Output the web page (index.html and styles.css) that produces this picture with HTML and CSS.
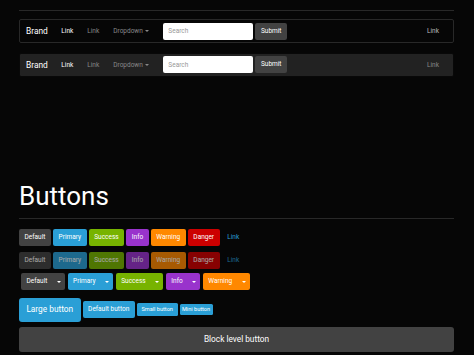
FILE: index.html
```html
<!DOCTYPE html>
<html lang="en">
<head>
<meta charset="utf-8">
<title>Buttons</title>
<link rel="stylesheet" href="styles.css">
</head>
<body>
<div class="container">
  <hr class="rule top-rule">

  <nav class="navbar">
    <span class="brand">Brand</span>
    <a class="nav-link active" href="#">Link</a>
    <a class="nav-link" href="#">Link</a>
    <a class="nav-link" href="#">Dropdown<span class="caret"></span></a>
    <form class="navbar-form">
      <input class="search" type="text" placeholder="Search">
      <button class="btn btn-default" type="button">Submit</button>
    </form>
    <a class="nav-link nav-right light" href="#">Link</a>
  </nav>

  <nav class="navbar navbar-inverse">
    <span class="brand">Brand</span>
    <a class="nav-link active" href="#">Link</a>
    <a class="nav-link" href="#">Link</a>
    <a class="nav-link" href="#">Dropdown<span class="caret"></span></a>
    <form class="navbar-form">
      <input class="search" type="text" placeholder="Search">
      <button class="btn btn-default" type="button">Submit</button>
    </form>
    <a class="nav-link nav-right" href="#">Link</a>
  </nav>

  <h1 class="title">Buttons</h1>
  <hr class="rule heading-rule">

  <div class="btn-row row-1">
    <button class="btn btn-default" type="button">Default</button>
    <button class="btn btn-primary" type="button">Primary</button>
    <button class="btn btn-success" type="button">Success</button>
    <button class="btn btn-info" type="button">Info</button>
    <button class="btn btn-warning" type="button">Warning</button>
    <button class="btn btn-danger" type="button">Danger</button>
    <button class="btn btn-link" type="button">Link</button>
  </div>

  <div class="btn-row row-2 disabled">
    <button class="btn btn-default" type="button">Default</button>
    <button class="btn btn-primary" type="button">Primary</button>
    <button class="btn btn-success" type="button">Success</button>
    <button class="btn btn-info" type="button">Info</button>
    <button class="btn btn-warning" type="button">Warning</button>
    <button class="btn btn-danger" type="button">Danger</button>
    <button class="btn btn-link" type="button">Link</button>
  </div>

  <div class="btn-row row-3">
    <div class="split">
      <button class="btn btn-default" type="button">Default</button>
      <button class="btn btn-default toggle" type="button"><span class="caret"></span></button>
    </div>
    <div class="split">
      <button class="btn btn-primary" type="button">Primary</button>
      <button class="btn btn-primary toggle" type="button"><span class="caret"></span></button>
    </div>
    <div class="split">
      <button class="btn btn-success" type="button">Success</button>
      <button class="btn btn-success toggle" type="button"><span class="caret"></span></button>
    </div>
    <div class="split">
      <button class="btn btn-info" type="button">Info</button>
      <button class="btn btn-info toggle" type="button"><span class="caret"></span></button>
    </div>
    <div class="split">
      <button class="btn btn-warning" type="button">Warning</button>
      <button class="btn btn-warning toggle" type="button"><span class="caret"></span></button>
    </div>
  </div>

  <div class="btn-row row-4">
    <button class="btn btn-primary btn-lg" type="button">Large button</button>
    <button class="btn btn-primary" type="button">Default button</button>
    <button class="btn btn-primary btn-sm" type="button">Small button</button>
    <button class="btn btn-primary btn-xs" type="button">Mini button</button>
  </div>

  <button class="btn btn-default btn-lg btn-block" type="button">Block level button</button>
</div>
</body>
</html>
```

FILE: styles.css
```css
html, body {
  margin: 0;
  padding: 0;
  background: #060606;
}

body {
  font-family: Roboto, "Liberation Sans", Arial, sans-serif;
  color: #888;
}

.container {
  padding: 0 20px 0 19px;
}

.rule {
  border: 0;
  border-top: 1px solid #282828;
  height: 0;
  margin: 0;
}

.top-rule {
  margin-top: 10px;
}

/* Navbars */
.navbar {
  display: flex;
  align-items: center;
  height: 24px;
  box-sizing: border-box;
  margin-top: 8px;
  padding: 0 7px 0 6px;
  background: #060606;
  border: 1px solid #282828;
  border-radius: 2px;
}

.navbar-inverse {
  margin-top: 9.5px;
  background: #222;
  border-color: #080808;
}

.brand {
  color: #fff;
  font-size: 8.4px;
  padding-right: 6.5px;
}

.nav-link {
  display: flex;
  align-items: center;
  padding: 0 7px;
  font-size: 6.5px;
  color: #888;
  text-decoration: none;
}

.nav-link.active {
  color: #fff;
}

.nav-link.light {
  color: #bbb;
}

.nav-right {
  margin-left: auto;
}

.caret {
  display: inline-block;
  width: 0;
  height: 0;
  border-top: 2px solid currentColor;
  border-left: 2px solid transparent;
  border-right: 2px solid transparent;
  margin-left: 2.5px;
}

.navbar-form {
  display: flex;
  align-items: center;
  gap: 2px;
  margin: 0 7px 0 7px;
}

.search {
  width: 90px;
  height: 17px;
  box-sizing: border-box;
  padding: 0 5px;
  border: 0;
  border-radius: 2px;
  background: #fff;
  font-family: inherit;
  font-size: 6.5px;
  color: #333;
  outline: none;
}

.search::placeholder {
  color: #999;
}

/* Heading */
.title {
  margin: 106.5px 0 0;
  font-size: 26px;
  line-height: 26px;
  font-weight: 400;
  color: #fff;
}

.heading-rule {
  margin-top: 9px;
}

/* Buttons */
.btn {
  display: inline-flex;
  align-items: center;
  justify-content: center;
  box-sizing: border-box;
  height: 17px;
  padding: 0 5.6px;
  border: 0;
  border-radius: 2px;
  font-family: inherit;
  font-size: 6.5px;
  line-height: 1;
  color: #fff;
  background: #424242;
  white-space: nowrap;
  cursor: pointer;
}

.btn-default { background: #424242; }
.btn-primary { background: #2a9fd6; }
.btn-success { background: #77b300; }
.btn-info    { background: #9933cc; }
.btn-warning { background: #ff8800; }
.btn-danger  { background: #cc0000; }

.btn-link {
  background: transparent;
  color: #2a9fd6;
}

.btn-row {
  display: flex;
  align-items: center;
  gap: 2px;
}

.row-1 { margin-top: 9.5px; }
.row-2 { margin-top: 6px; }
.row-3 { margin-top: 4.5px; margin-left: 2px; gap: 2.5px; }
.row-4 { margin-top: 7.5px; }

.disabled .btn {
  opacity: 0.65;
}

.split {
  display: flex;
}

.split .btn {
  border-radius: 2px 0 0 2px;
}

.split .toggle {
  width: 12px;
  padding: 0;
  border-radius: 0 2px 2px 0;
}

.split .toggle .caret {
  margin-left: 0;
  color: #fff;
}

.btn-lg {
  height: 24px;
  padding: 0 7.4px;
  font-size: 8.3px;
  border-radius: 3px;
}

.btn-sm {
  height: 13px;
  padding: 0 4.6px;
  font-size: 5.6px;
  border-radius: 1.5px;
}

.btn-xs {
  height: 11px;
  padding: 0 2.4px;
  font-size: 5.6px;
  border-radius: 1.5px;
}

.btn-block {
  display: flex;
  width: 100%;
  height: 25px;
  margin-top: 5px;
}
```
